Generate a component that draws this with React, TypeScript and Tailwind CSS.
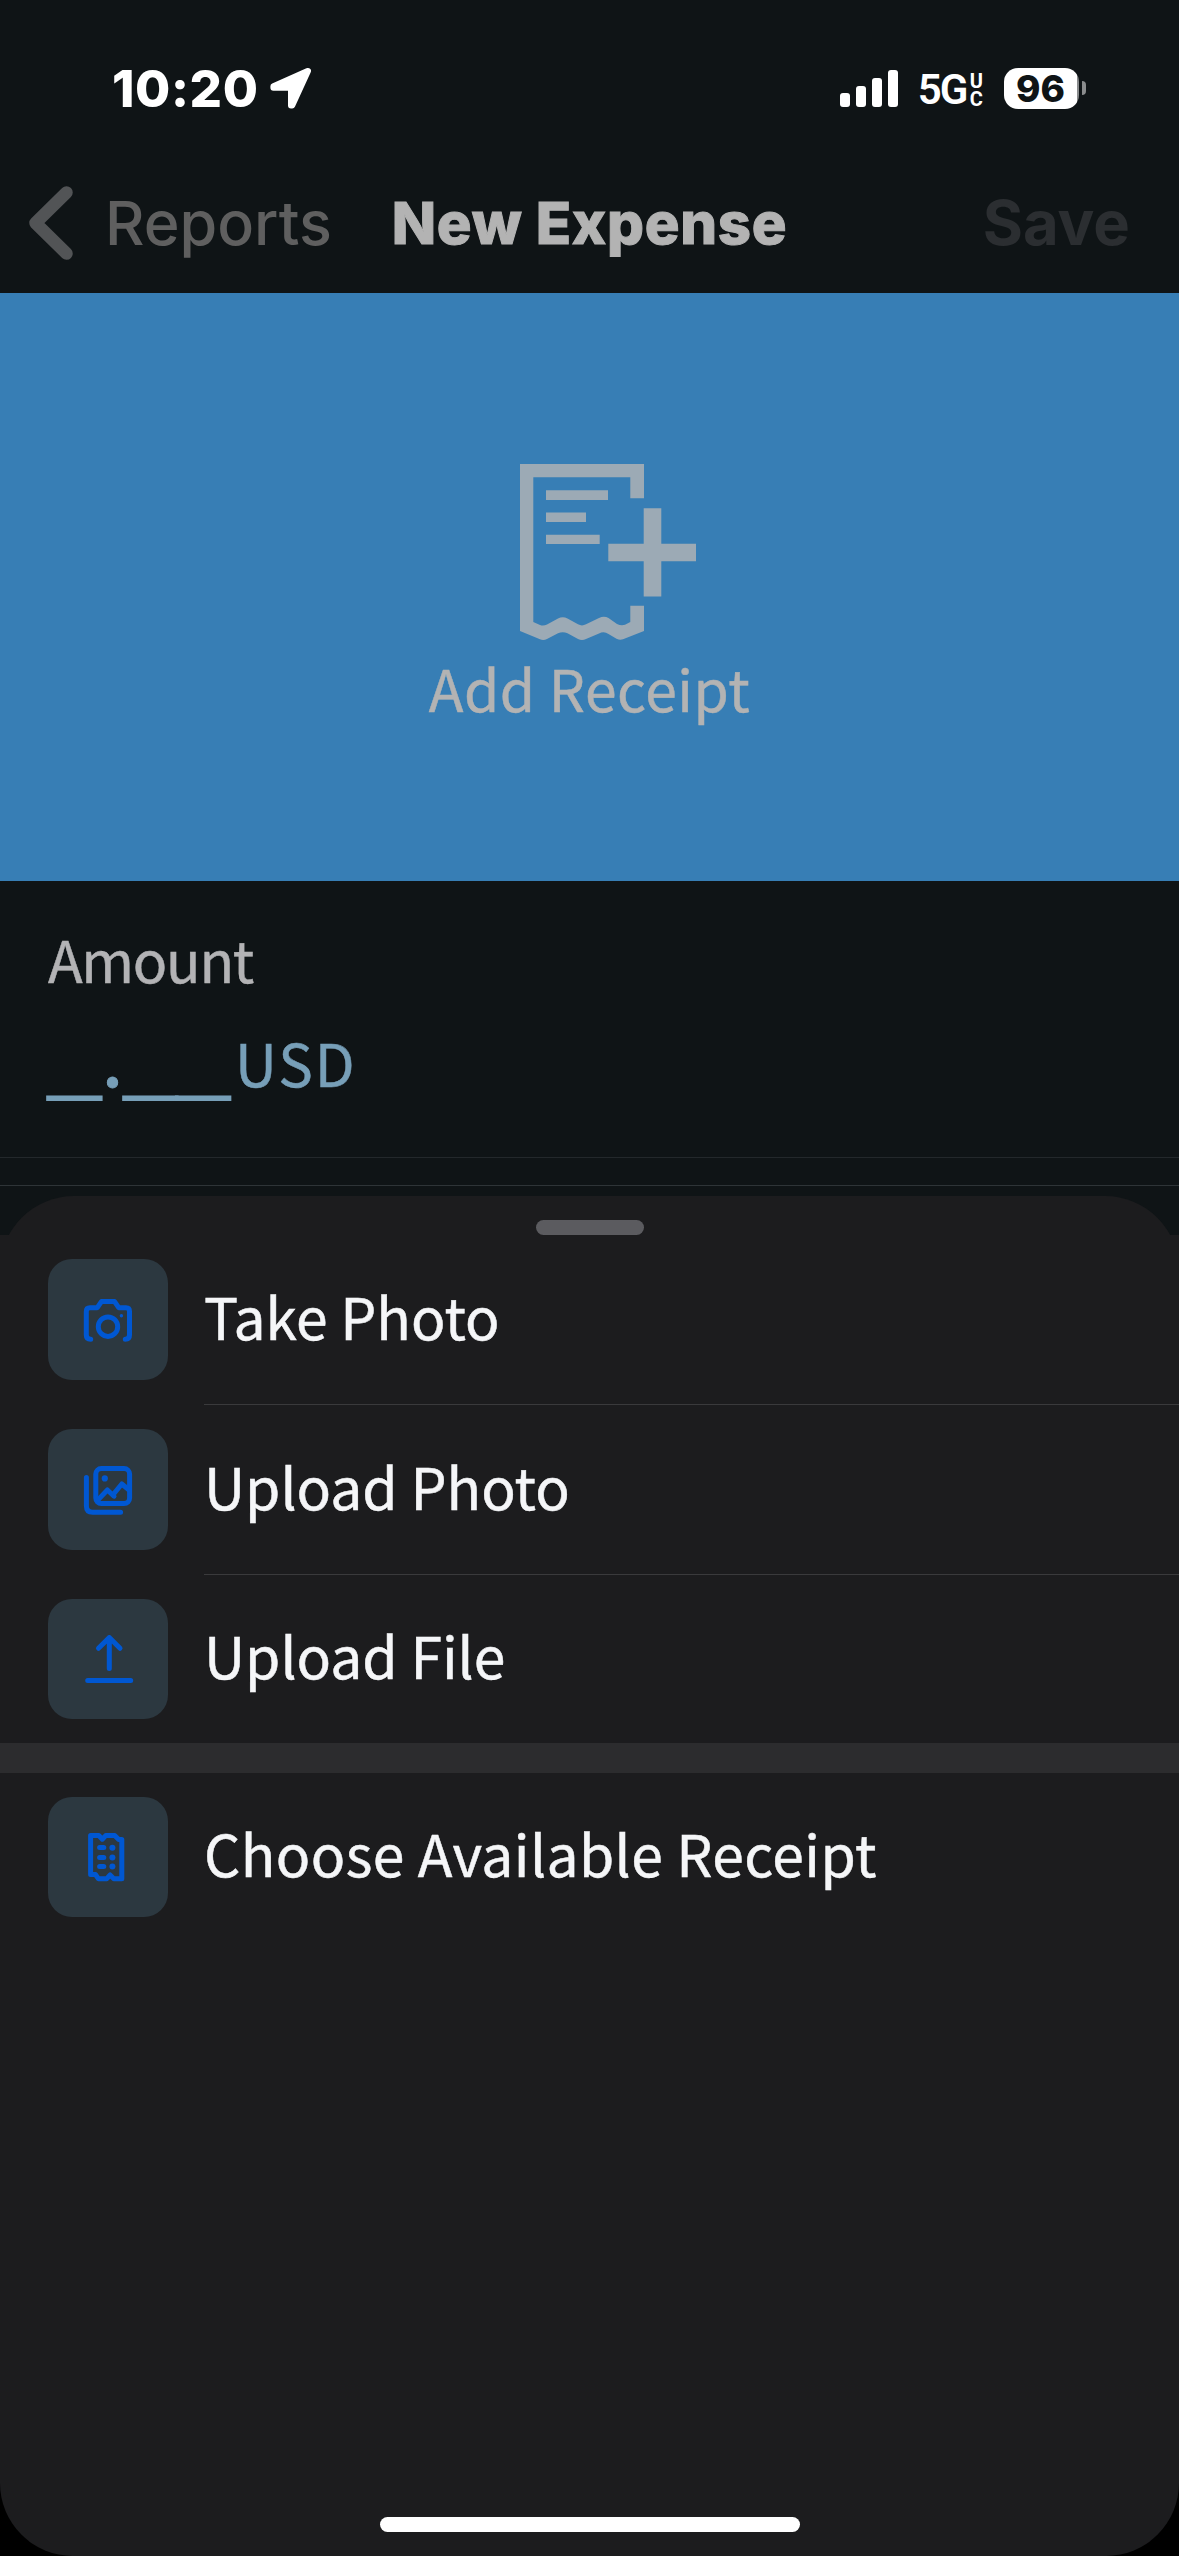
import React from 'react';

const CameraIcon = () => (
    <svg viewBox="0 0 120 120" className="h-[120px] w-[120px]" fill="none" stroke="currentColor" strokeWidth={5} strokeLinecap="round" strokeLinejoin="round">
        <path d="M42.7 79.3Q38.3 79.3 38.3 75V51.5Q38.3 47.7 42 47.7H49.3L53.6 41.4H66.4L70.7 47.7H78Q81.5 47.7 81.5 51.5V75Q81.5 79.3 77.3 79.3" />
        <circle cx="60" cy="66.7" r="9.7" />
        <circle cx="73.4" cy="55.8" r="1.7" fill="currentColor" stroke="none" />
    </svg>
);

const GalleryIcon = () => (
    <svg viewBox="0 0 120 120" className="h-[120px] w-[120px]" fill="none" stroke="currentColor" strokeWidth={5} strokeLinecap="round" strokeLinejoin="round">
        <rect x="47.8" y="38.6" width="33.8" height="35" rx="5.5" />
        <path d="M38.4 47.6V76Q38.4 82.3 44.7 82.3H72.6" />
        <path d="M49.3 70.6L59.4 60L66 66.2M65.2 64.5L73.8 54L81.4 60.2" />
        <circle cx="56.8" cy="48.4" r="3.1" fill="currentColor" stroke="none" />
    </svg>
);

const UploadIcon = () => (
    <svg viewBox="0 0 120 120" className="h-[120px] w-[120px]" fill="none" stroke="currentColor" strokeWidth={5} strokeLinecap="round" strokeLinejoin="round">
        <path d="M61.3 38.6V69.6M50.5 49.3L61.3 38.6L72 49.3M39.7 81.4H82.7" />
    </svg>
);

const ReceiptIcon = () => (
    <svg viewBox="0 0 120 120" className="h-[120px] w-[120px]" fill="none" stroke="currentColor" strokeWidth={5} strokeLinecap="round" strokeLinejoin="round">
        <path d="M42.6 38.6H50.8L54.3 42.2L57.7 38.6H66.7L70.7 42.6H73.8V81.7H65.8L62.1 78L58.8 81.7H50.3L47.4 77.4H42.6Z" />
        <path d="M51.6 50.4H55.8M51.6 60.4H55.8M51.6 69.4H55.8" />
        <g fill="currentColor" stroke="none">
            <circle cx="64.4" cy="50.8" r="3" />
            <circle cx="64.4" cy="60.4" r="3" />
            <circle cx="64.4" cy="69.4" r="3" />
        </g>
    </svg>
);

const AddReceiptIcon = () => (
    <svg viewBox="0 0 176 176" className="ml-[37px] h-[176px] w-[176px]" fill="#9caab5">
        <path d="M0 0H124V34.3H110.3V13.3H13.3V158L20 161Q23.5 162.3 27 160.5L38 154.5Q42.7 152 47.5 154.5L58 160.3Q62 162.5 66 160.3L79 154Q84 151.5 88.5 154L97 160Q101 162 105 160.8L110.3 158V141.7H124V167L103 175.3Q100 176.5 96.5 174.8L88.5 170Q84 167 79 169.5L66 175Q62 177 58 175L47.5 169.3Q42.7 167 38 169.3L27 175Q23.5 176.7 20 175.3L0 167Z" />
        <path d="M26 26.3H88V36H26ZM26 48.5H66V58H26ZM26 70.7H79.7V80H26Z" />
        <path d="M123.7 44.3H141.3V79.7H176V97.3H141.3V132.5H123.7V97.3H88.3V79.7H123.7Z" />
    </svg>
);

const StatusBar = () => (
    <div className="flex h-44 items-center justify-between pl-[112px] pr-[93px] font-['Inter',sans-serif] text-white">
        <div className="flex items-center">
            <span className="w-[158px] text-[51px] leading-none font-extrabold tracking-[0.6px]">10:20</span>
            <svg viewBox="0 0 41 42" className="h-[42px] w-[41px]" fill="white" stroke="white" strokeWidth={6} strokeLinejoin="round">
                <path d="M37.6 4L3.4 19.2V20.7H21V38.4H22.2L38 4Z" />
            </svg>
        </div>
        <div className="flex items-center">
            <div className="flex h-[37px] items-end gap-1.5">
                <div className="h-3.5 w-2.5 rounded-[3px] bg-white" />
                <div className="h-[21px] w-2.5 rounded-[3px] bg-white" />
                <div className="h-[29px] w-2.5 rounded-[3px] bg-white" />
                <div className="h-[37px] w-2.5 rounded-[3px] bg-white" />
            </div>
            <div className="ml-5 flex items-center pt-[3px] font-['Roboto',sans-serif]">
                <span className="w-[52px] text-[42px] leading-none font-semibold tracking-[-2px]">5G</span>
                <div className="flex flex-col text-[20px] leading-[18px] font-bold">
                    <span>U</span>
                    <span>C</span>
                </div>
            </div>
            <div className="flex items-center gap-[3px] pl-[21px]">
                <div className="flex h-[41px] w-[75px] items-center justify-center rounded-[14px] bg-[linear-gradient(to_right,white_73px,#8a8c8d_73px)] pr-0.5 text-[37px] leading-none font-extrabold text-[#0f1416]">
                    96
                </div>
                <div className="h-3.5 w-1 rounded-r-full bg-[#8a8c8d]" />
            </div>
        </div>
    </div>
);

const NavBar = () => (
    <div className="grid h-[117px] grid-cols-[380px_1fr_380px] items-center pb-[23px]">
        <div className="flex items-center pl-[29px] text-[#5f5f5f]">
            <svg viewBox="0 0 44 74" className="h-[74px] w-11" fill="none" stroke="#525456" strokeWidth={12.5} strokeLinecap="round" strokeLinejoin="round">
                <path d="M37.5 6.5L6.5 37L37.5 67.5" />
            </svg>
            <span className="ml-8 font-['Inter',sans-serif] text-[61px] leading-none font-medium">Reports</span>
        </div>
        <h1 className="text-center font-['Inter',sans-serif] text-[58px] leading-none font-extrabold tracking-[0.7px] whitespace-nowrap text-[#b3b3b3] [-webkit-text-stroke:1px]">
            New Expense
        </h1>
        <span className="pr-[49px] text-right font-['Inter',sans-serif] text-[61.5px] leading-none font-bold text-[#2b2e31]">Save</span>
    </div>
);

interface ActionRowProps {
    icon: React.ReactNode;
    label: string;
    divider?: boolean;
    tracking?: string;
}

const ActionRow = ({ icon, label, divider, tracking = 'tracking-normal' }: ActionRowProps) => (
    <div className="flex pl-12">
        <div className={`my-6 flex w-[120px] items-center justify-center rounded-3xl bg-[#2c3840] text-[#0057d2] ${divider ? 'h-[121px]' : 'h-[120px]'}`}>
            {icon}
        </div>
        <div className={`ml-9 flex flex-1 items-center pb-2.5 text-[57px] leading-[70px] text-[#f5f6f8] [-webkit-text-stroke:0.5px] ${tracking} ${divider ? 'h-[170px] border-b border-[#3a3a3c]' : 'h-[168px]'}`}>
            {label}
        </div>
    </div>
);

export default function App() {
    return (
        <div className="flex h-[2556px] w-[1179px] flex-col overflow-hidden bg-black font-['Noto_Sans_CJK_JP',sans-serif]">
            <div className="bg-[#0f1416]">
                <StatusBar />
                <NavBar />
                <div className="flex h-[588px] flex-col items-center bg-[#377eb5] pt-[171px]">
                    <AddReceiptIcon />
                    <span className="mt-3 text-[57px] leading-[70px] tracking-[0.5px] text-[#b3b3b3] [-webkit-text-stroke:0.5px]">Add Receipt</span>
                </div>
                <div className="h-[277px] border-b border-[#23282b] px-12 pt-[42px] text-[57px] leading-[70px] [-webkit-text-stroke:0.5px]">
                    <div className="tracking-[-1.3px] text-[#b3b3b5]">Amount</div>
                    <div className="mt-[34px] flex h-[70px] text-[#779fb8]">
                        <span className="w-[53px] font-['Liberation_Sans',sans-serif] text-[95px] leading-[57px] font-bold [-webkit-text-stroke:1.8px]">_</span>
                        <span className="w-[23px] text-center font-bold [-webkit-text-stroke:1px]">.</span>
                        <span className="w-[106px] font-['Liberation_Sans',sans-serif] text-[95px] leading-[57px] font-bold [-webkit-text-stroke:1.8px]">__</span>
                        <span className="ml-[5px] text-[58px] leading-[71px] tracking-[2px]">USD</span>
                    </div>
                </div>
                <div className="h-7 border-b border-[#2e3437]" />
                {/* top of the sheet, the page behind shows round its corners */}
                <div className="h-[49px] overflow-hidden pt-2.5">
                    <div className="h-40 rounded-t-[74px] bg-[#1c1c1e] pt-6">
                        <div className="mx-auto h-[15px] w-[108px] rounded-full bg-[#5b5b5f]" />
                    </div>
                </div>
            </div>
            <div className="flex flex-1 flex-col rounded-b-[73px] bg-[#1c1c1e]">
                <ActionRow icon={<CameraIcon />} label="Take Photo" divider />
                <ActionRow icon={<GalleryIcon />} label="Upload Photo" divider />
                <ActionRow icon={<UploadIcon />} label="Upload File" />
                <div className="h-[30px] bg-[#2c2c2e]" />
                <ActionRow icon={<ReceiptIcon />} label="Choose Available Receipt" tracking="tracking-[0.4px]" />
                <div className="mx-auto mt-auto mb-6 h-[15px] w-[420px] rounded-full bg-white" />
            </div>
        </div>
    );
}
